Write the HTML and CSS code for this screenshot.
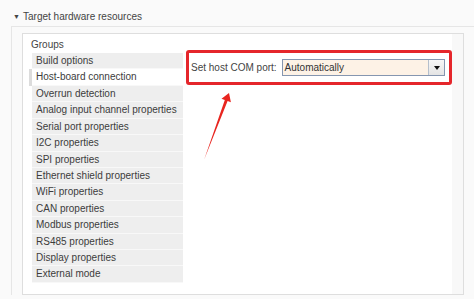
FILE: index.html
```html
<!DOCTYPE html>
<html lang="en">
<head>
    <meta charset="UTF-8">
    <title>Target hardware resources</title>
    <link rel="stylesheet" href="styles.css">
</head>
<body>
    <div class="section">
        <div class="section-title"><span class="caret">&#9660;</span>Target hardware resources</div>
        <div class="frame">
            <div class="groups">
                <div class="groups-side">
                    <div class="groups-label">Groups</div>
                    <ul class="group-list">
                        <li>Build options</li>
                        <li class="selected">Host-board connection</li>
                        <li>Overrun detection</li>
                        <li>Analog input channel properties</li>
                        <li>Serial port properties</li>
                        <li>I2C properties</li>
                        <li>SPI properties</li>
                        <li>Ethernet shield properties</li>
                        <li>WiFi properties</li>
                        <li>CAN properties</li>
                        <li>Modbus properties</li>
                        <li>RS485 properties</li>
                        <li>Display properties</li>
                        <li>External mode</li>
                    </ul>
                </div>
                <div class="pane">
                    <div class="highlight">
                        <label class="field-label">Set host COM port:</label>
                        <div class="combo">
                            <span class="combo-value">Automatically</span>
                            <span class="combo-button"><span class="combo-arrow"></span></span>
                        </div>
                    </div>
                </div>
            </div>
        </div>
    </div>

    <!-- annotation arrow pointing at the highlighted field -->
    <svg class="arrow" width="40" height="80" viewBox="0 0 40 80">
        <polygon points="29,8 21.5,13.7 24.8,15 4,75 27.6,16 30.9,17.2" fill="#e8251f"/>
    </svg>
</body>
</html>
```

FILE: styles.css
```css
body {
    font-family: "Liberation Sans", Arial, sans-serif;
    font-size: 10px;
    background-color: #fafafa;
    color: #3c3c3c;
    margin: 0;
    padding: 0;
    overflow: hidden;
}
.section {
    padding: 10px 0 0 11px;
}
.section-title {
    height: 16px;
    line-height: 14px;
    padding-left: 2px;
    color: #444;
}
.caret {
    display: inline-block;
    width: 10px;
    font-size: 7px;
    vertical-align: top;
    line-height: 14px;
}
.frame {
    border-top: 1px solid #e6e6e6;
    border-left: 1px solid #e6e6e6;
    padding: 6px 10px 0 10px;
}
.groups {
    display: flex;
    height: 262px;
    box-sizing: border-box;
    border: 1px solid #dedede;
    background-color: #fff;
    box-shadow: inset -12px 0 0 #f8f8f8;
}
.groups-side {
    padding-left: 8px;
    padding-top: 4px;
}
.groups-label {
    line-height: 14px;
    color: #444;
}
.group-list {
    list-style: none;
    margin: 1px 0 0 1px;
    padding: 0;
    width: 151px;
}
.group-list li {
    height: 16.43px;
    line-height: 15.4px;
    box-sizing: border-box;
    padding-left: 4px;
    background-color: #eeeeee;
    border-bottom: 1px solid #f8f8f8;
    white-space: nowrap;
}
.group-list li.selected {
    background-color: #fff;
    box-shadow: -3px 0 0 #dcdcdc;
}
.pane {
    flex: 1;
    margin-right: 11px;
    background-color: #fff;
    padding: 16px 0 0 3px;
}
.highlight {
    display: flex;
    align-items: center;
    gap: 5px;
    height: 35px;
    box-sizing: border-box;
    border: 3px solid #e5262b;
    border-radius: 3px;
    padding: 0 4px 0 2px;
}
.field-label {
    color: #444;
    white-space: nowrap;
}
.combo {
    flex: 1;
    display: flex;
    height: 17px;
    box-sizing: border-box;
    border: 1px solid #8596b0;
    background-color: #fdf2e6;
}
.combo-value {
    flex: 1;
    padding-left: 2px;
    line-height: 15px;
    color: #333;
}
.combo-button {
    width: 15px;
    border-left: 1px solid #b5bfcc;
    background: linear-gradient(#f7f7f7, #e4e4e4);
    display: flex;
    align-items: center;
    justify-content: center;
}
.combo-arrow {
    width: 0;
    height: 0;
    border-left: 3px solid transparent;
    border-right: 3px solid transparent;
    border-top: 4px solid #111;
}
.arrow {
    position: absolute;
    left: 200px;
    top: 85px;
}
```
